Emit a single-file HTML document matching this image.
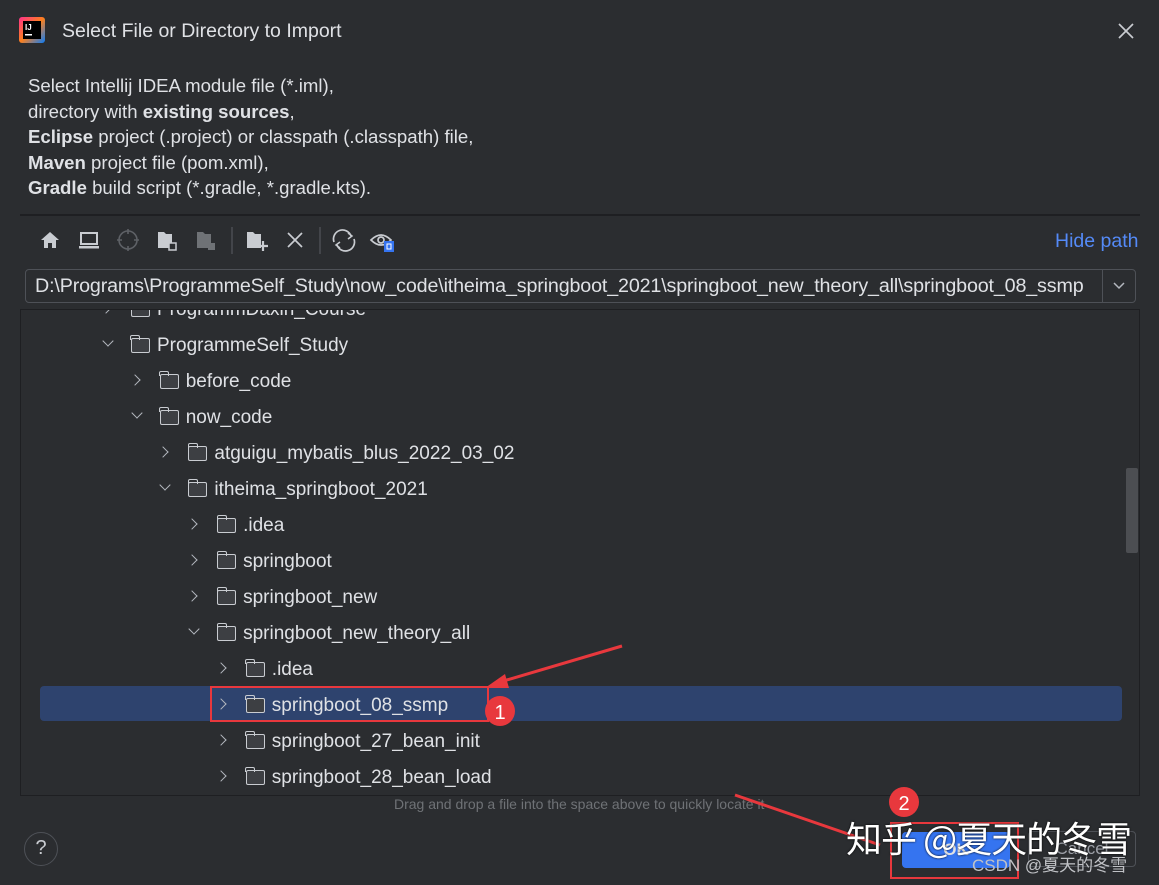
<!DOCTYPE html>
<html><head><meta charset="utf-8"><style>
*{margin:0;padding:0;box-sizing:border-box}
body{width:1159px;height:885px;background:#2b2d30;font-family:"Liberation Sans","Noto Sans CJK SC",sans-serif;color:#dfe1e5;position:relative;overflow:hidden}
.a{position:absolute;white-space:nowrap}
.desc{left:28px;top:73px;font-size:18.6px;line-height:25.5px;color:#dfe1e5}
.desc b{font-weight:bold}
.row{position:absolute;height:36px;line-height:36px;font-size:19px;color:#dfe1e5;white-space:nowrap}
.chev{position:absolute;width:8px;height:8px;border-right:1.6px solid #b4b8bf;border-bottom:1.6px solid #b4b8bf}
.fold{position:absolute;width:19px;height:15px;border:1.6px solid #c9ccd1;border-radius:2px;background:#3d3f43}
.fold:before{content:"";position:absolute;left:-1.6px;top:-4px;width:8px;height:4px;border:1.6px solid #c9ccd1;border-bottom:none;border-radius:2px 2px 0 0}
</style></head><body>
<svg class="a" style="left:19px;top:17px" width="26" height="26" viewBox="0 0 26 26">
<defs><linearGradient id="g" x1="0" y1="0" x2="1" y2="1"><stop offset="0" stop-color="#ff318c"/><stop offset="0.5" stop-color="#fc801d"/><stop offset="1" stop-color="#087cfa"/></linearGradient></defs>
<rect x="0" y="0" width="26" height="26" rx="3" fill="url(#g)"/><rect x="4" y="4" width="18" height="18" fill="#000"/>
<text x="6" y="13" font-size="8" fill="#fff" font-family="Liberation Sans" font-weight="bold">IJ</text><rect x="6" y="17" width="7" height="1.5" fill="#fff"/></svg>
<div class="a" style="left:62px;top:20px;font-size:19.5px;color:#dfe1e5">Select File or Directory to Import</div>
<svg class="a" style="left:1117px;top:22px" width="18" height="18"><path d="M2 2L16 16M16 2L2 16" stroke="#c9ccd1" stroke-width="1.7"/></svg>
<div class="a desc">Select Intellij IDEA module file (*.iml),<br>directory with <b>existing sources</b>,<br><b>Eclipse</b> project (.project) or classpath (.classpath) file,<br><b>Maven</b> project file (pom.xml),<br><b>Gradle</b> build script (*.gradle, *.gradle.kts).</div>
<div class="a" style="left:20px;top:214px;width:1120px;height:2px;background:#1e1f22"></div>
<svg class="a" style="left:30px;top:224px" width="380" height="34" viewBox="0 0 380 34">
<g fill="#c9ccd1">
<path d="M20 8L11 16H14V24H18V19H22V24H26V16H29Z"/>
<rect x="51" y="9" width="16" height="11" fill="none" stroke="#c9ccd1" stroke-width="2"/><rect x="49" y="22" width="20" height="2.5"/>
</g>
<circle cx="98" cy="16" r="9" fill="none" stroke="#5e6166" stroke-width="1.6"/><path d="M98 5V10M98 22V27M87 16H92M104 16H109" stroke="#5e6166" stroke-width="1.6"/>
<path d="M128 8H134L136 10H142V24H128Z" fill="#c9ccd1"/><rect x="139" y="19" width="7" height="7" fill="#2b2d30" stroke="#c9ccd1" stroke-width="1.5"/>
<path d="M167 8H173L175 10H181V24H167Z" fill="#6f7276"/><rect x="178" y="19" width="7" height="7" fill="#6f7276"/>
<rect x="201" y="3" width="2" height="27" fill="#43454a"/>
<path d="M217 8H223L225 10H231V24H217Z" fill="#c9ccd1"/><path d="M233 17V27M228 22H238" stroke="#c9ccd1" stroke-width="2.2"/>
<path d="M258 9L272 23M272 9L258 23" stroke="#c9ccd1" stroke-width="1.7"/>
<rect x="289" y="3" width="2" height="27" fill="#43454a"/>
<path d="M304 18A9 9 0 0 1 321 12M324 15A9 9 0 0 1 307 21" fill="none" stroke="#c9ccd1" stroke-width="1.7"/><path d="M318 9L322 12L318 15M310 18L306 21L310 24" fill="none" stroke="#c9ccd1" stroke-width="1.5"/>
<path d="M341 16Q351 6 361 16Q351 26 341 16Z" fill="none" stroke="#c9ccd1" stroke-width="1.7"/><circle cx="351" cy="16" r="3" fill="none" stroke="#c9ccd1" stroke-width="1.7"/>
<rect x="354" y="17" width="10" height="11" fill="#3574f0"/><rect x="357" y="20" width="4" height="5" fill="none" stroke="#fff" stroke-width="1"/>
</svg>
<div class="a" style="left:1055px;top:230px;font-size:19.5px;color:#548af7">Hide path</div>
<div class="a" style="left:25px;top:269px;width:1111px;height:34px;border:1px solid #4e5157;border-radius:4px;background:#2b2d30"></div>
<div class="a" style="left:1102px;top:270px;width:1px;height:32px;background:#4e5157"></div>
<svg class="a" style="left:1112px;top:280px" width="14" height="12"><path d="M2 3L7 8L12 3" fill="none" stroke="#b4b8bf" stroke-width="1.5"/></svg>
<div class="a" style="left:35px;top:274px;font-size:19.7px;line-height:24px;color:#dfe1e5;letter-spacing:-0.15px">D:\Programs\ProgrammeSelf_Study\now_code\itheima_springboot_2021\springboot_new_theory_all\springboot_08_ssmp</div>
<div class="a" style="left:20px;top:309px;width:1120px;height:487px;border:1px solid #1e1f22;overflow:hidden">
<div class="a" style="left:19px;top:376px;width:1082px;height:35px;background:#2e436e;border-radius:4px"></div>
<div class="a" style="left:1105px;top:158px;width:12px;height:85px;background:#4c4e52;border-radius:2px"></div>
<div id="tree"></div>
</div>
<script>
var rows=[[308,0,0,"ProgrammDaxin_Course"],[344,0,1,"ProgrammeSelf_Study"],[380,1,0,"before_code"],[416,1,1,"now_code"],[452,2,0,"atguigu_mybatis_blus_2022_03_02"],[488,2,1,"itheima_springboot_2021"],[524,3,0,".idea"],[560,3,0,"springboot"],[596,3,0,"springboot_new"],[632,3,1,"springboot_new_theory_all"],[668,4,0,".idea"],[704,4,0,"springboot_08_ssmp"],[740,4,0,"springboot_27_bean_init"],[776,4,0,"springboot_28_bean_load"]];
var h="";
rows.forEach(function(r){var cy=r[0]-310,cx=87+r[1]*28.7;
var ch=r[2]?'<div class="chev" style="left:'+(cx-4)+'px;top:'+(cy-7)+'px;transform:rotate(45deg)"></div>':'<div class="chev" style="left:'+(cx-6)+'px;top:'+(cy-4)+'px;transform:rotate(-45deg)"></div>';
h+=ch+'<div class="fold" style="left:'+(cx+23)+'px;top:'+(cy-6)+'px"></div><div class="row" style="left:'+(cx+49)+'px;top:'+(cy-16)+'px">'+r[3]+'</div>';});
document.getElementById("tree").innerHTML=h;
</script>
<div class="a" style="left:394px;top:796px;font-size:14px;color:#6f7276">Drag and drop a file into the space above to quickly locate it</div>
<div class="a" style="left:24px;top:832px;width:34px;height:34px;border:1.5px solid #4e5157;border-radius:50%;text-align:center;line-height:31px;font-size:20px;color:#c9ccd1">?</div>
<div class="a" style="left:902px;top:832px;width:108px;height:36px;background:#3574f0;border-radius:4px;text-align:center;line-height:36px;font-size:17px;font-weight:bold;color:#dfe1e5">OK</div>
<div class="a" style="left:1028px;top:831px;width:108px;height:36px;border:1px solid #4e5157;border-radius:4px;text-align:center;line-height:34px;font-size:17px;color:#9da0a8">Cancel</div>
<div class="a" style="left:210px;top:686px;width:279px;height:36px;border:2.5px solid #e8383d"></div>
<div class="a" style="left:890px;top:822px;width:129px;height:57px;border:2.5px solid #e8383d"></div>
<svg class="a" style="left:0;top:0" width="1159" height="885">
<path d="M622 646L500 682" stroke="#e8383d" stroke-width="3"/><path d="M485 688L505 674L509 688Z" fill="#e8383d"/>
<path d="M735 795L880 845" stroke="#e8383d" stroke-width="3"/>
<circle cx="500" cy="711" r="15" fill="#e8383d"/><text x="500" y="719" text-anchor="middle" fill="#fff" font-size="20" font-family="Liberation Sans">1</text>
<circle cx="904" cy="802" r="15" fill="#e8383d"/><text x="904" y="810" text-anchor="middle" fill="#fff" font-size="20" font-family="Liberation Sans">2</text>
</svg>
<div class="a" style="left:846px;top:814px;font-size:36px;line-height:46px;color:#fff;font-family:'Noto Sans CJK SC',sans-serif;letter-spacing:-1px;text-shadow:0 0 2px #000">知乎 @夏天的冬雪</div>
<div class="a" style="left:972px;top:851px;font-size:17px;color:#c0c2c6;font-family:'Liberation Sans','Noto Sans CJK SC',sans-serif">CSDN @夏天的冬雪</div>
</body></html>
